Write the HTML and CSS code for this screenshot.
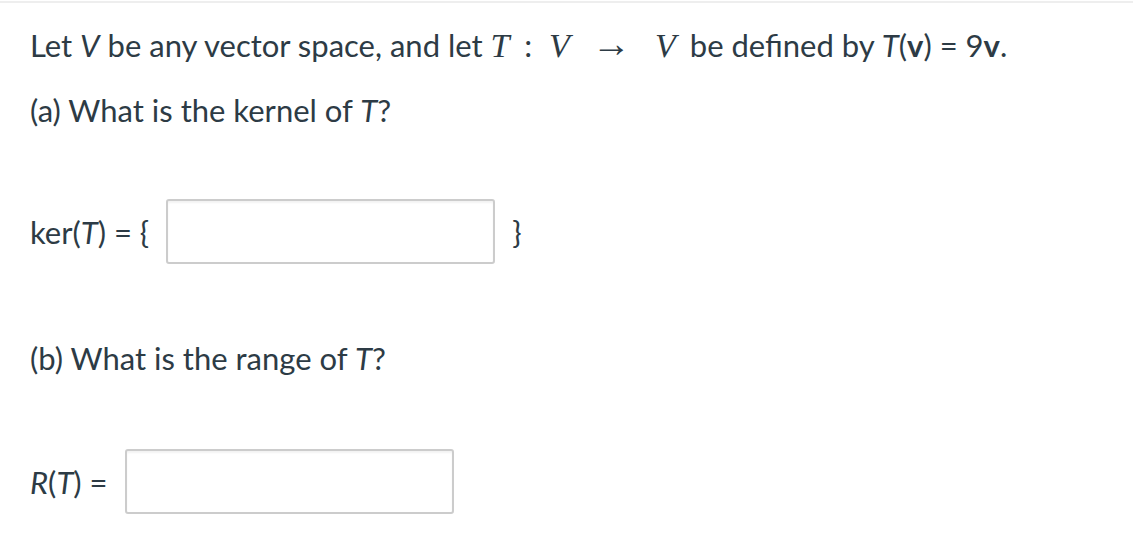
FILE: index.html
```html
<!DOCTYPE html>
<html>
<head>
<meta charset="utf-8">
<link rel="stylesheet" href="styles.css">
</head>
<body>
<div class="question">
  <p class="line intro">Let <i>V</i> be any vector space, and let <span class="math"><span class="mi">T</span><span class="mo colon">:</span><span class="mi">V</span><span class="mo arrow">→</span><span class="mi">V</span></span> be defined by <i>T</i>(<b>v</b>) = 9<b>v</b>.</p>
  <p class="line part-a">(a) What is the kernel of <i>T</i>?</p>
  <div class="answer-row ker">
    <span class="label">ker(<i>T</i>) = {</span>
    <span class="box"></span>
    <span class="label close">}</span>
  </div>
  <p class="line part-b">(b) What is the range of <i>T</i>?</p>
  <div class="answer-row range">
    <span class="label"><i>R</i>(<i>T</i>) =</span>
    <span class="box"></span>
  </div>
</div>
</body>
</html>
```
FILE: styles.css
```css
html, body {
  margin: 0;
  padding: 0;
  background: #ffffff;
}
body {
  font-family: Lato, "Open Sans", sans-serif;
  color: #2d3b45;
  font-size: 31px;
}
.question {
  border-top: 2px solid #eeeeee;
  margin-top: 1px;
  padding: 0 30px;
}
.line {
  margin: 0;
  line-height: 36px;
}
.intro {
  padding-top: 21px;
}
.part-a {
  margin-top: 29px;
}
.math {
  font-family: "Liberation Serif", "DejaVu Serif", serif;
  font-size: 1.1em;
  line-height: 1;
  margin-right: 6px;
}
.mi { font-style: italic; }
.mo { font-style: normal; }
.colon { margin: 0 16px 0 14px; }
.arrow { margin: 0 24px 0 22px; font-size: 1.15em; }
.answer-row {
  display: flex;
  align-items: center;
  gap: 17px;
}
.ker { margin-top: 71px; }
.range { margin-top: 73px; }
.part-b { margin-top: 76px; }
.box {
  display: block;
  width: 325px;
  height: 61px;
  border: 2px solid #cccccc;
  border-radius: 3px;
  box-shadow: inset 0 2px 2px rgba(0, 0, 0, 0.05);
  background: #ffffff;
}
```
